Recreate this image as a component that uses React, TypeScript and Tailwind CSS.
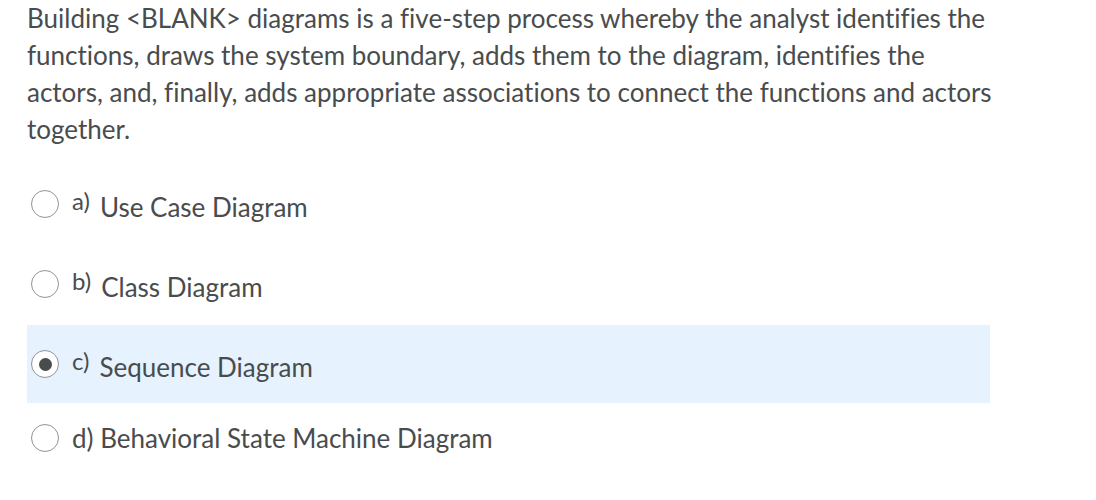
import React from "react";

const options = [
  { key: "a)", text: "Use Case Diagram", selected: false, small: true, h: "h-[78px]" },
  { key: "b)", text: "Class Diagram", selected: false, small: true, h: "h-[78px]" },
  { key: "c)", text: "Sequence Diagram", selected: true, small: true, h: "h-[78px]" },
  { key: "d)", text: "Behavioral State Machine Diagram", selected: false, small: false, h: "h-[66px]" },
];

function Radio({ selected }: { selected: boolean }) {
  return (
    <span className="w-[28px] h-[28px] rounded-full border border-[#8f9498] bg-white flex items-center justify-center shrink-0">
      {selected && <span className="w-[13px] h-[13px] rounded-full bg-[#494c4e]" />}
    </span>
  );
}

export default function App() {
  return (
    <div className="w-[1096px] h-[500px] bg-white font-['Lato',sans-serif] text-[#494c4e] [font-variant-ligatures:none]">
      <div className="ml-[27px]">
        <p className="w-[975px] text-[26px] leading-[37px]">
          Building &lt;BLANK&gt; diagrams is a five-step process whereby the analyst identifies the functions,
          draws the system boundary, adds them to the diagram, identifies the actors, and, finally, adds
          appropriate associations to connect the functions and actors together.
        </p>
        <div className="w-[963px] mt-[17px] flex flex-col gap-[2px]">
          {options.map((o) => (
            <div
              key={o.key}
              className={`${o.h} flex items-center pl-[4px] ${o.selected ? "bg-[#e6f2fd]" : ""}`}
            >
              <Radio selected={o.selected} />
              {o.small ? (
                <span className="ml-[13px] flex items-baseline">
                  <span className="text-[24px] relative -top-[4px] mr-[10px]">{o.key}</span>
                  <span className="text-[26px] relative top-[3px]">{o.text}</span>
                </span>
              ) : (
                <span className="ml-[13px] text-[26px]">
                  {o.key} {o.text}
                </span>
              )}
            </div>
          ))}
        </div>
      </div>
    </div>
  );
}
